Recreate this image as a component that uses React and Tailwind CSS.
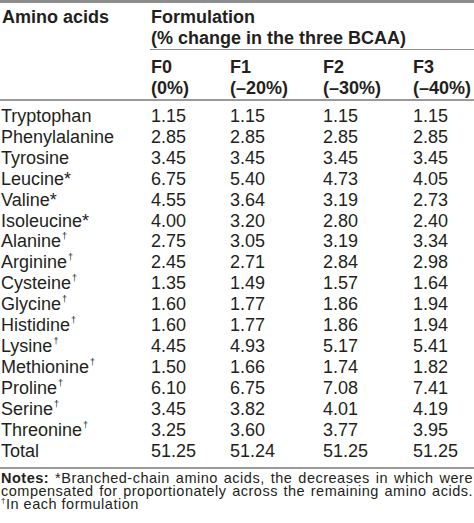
import React from 'react';

const rows = [
  ['Tryptophan', false, '1.15', '1.15', '1.15', '1.15'],
  ['Phenylalanine', false, '2.85', '2.85', '2.85', '2.85'],
  ['Tyrosine', false, '3.45', '3.45', '3.45', '3.45'],
  ['Leucine*', false, '6.75', '5.40', '4.73', '4.05'],
  ['Valine*', false, '4.55', '3.64', '3.19', '2.73'],
  ['Isoleucine*', false, '4.00', '3.20', '2.80', '2.40'],
  ['Alanine', true, '2.75', '3.05', '3.19', '3.34'],
  ['Arginine', true, '2.45', '2.71', '2.84', '2.98'],
  ['Cysteine', true, '1.35', '1.49', '1.57', '1.64'],
  ['Glycine', true, '1.60', '1.77', '1.86', '1.94'],
  ['Histidine', true, '1.60', '1.77', '1.86', '1.94'],
  ['Lysine', true, '4.45', '4.93', '5.17', '5.41'],
  ['Methionine', true, '1.50', '1.66', '1.74', '1.82'],
  ['Proline', true, '6.10', '6.75', '7.08', '7.41'],
  ['Serine', true, '3.45', '3.82', '4.01', '4.19'],
  ['Threonine', true, '3.25', '3.60', '3.77', '3.95'],
  ['Total', false, '51.25', '51.24', '51.25', '51.25'],
];

const cols = 'grid grid-cols-[150px_80px_93px_90px_61px]';

const App = () => {
  return (
    <div className="w-[474px] h-[523px] overflow-hidden bg-white text-[#231f20] font-['Liberation_Sans',Arial,sans-serif]">
      <div className="border-t-[3px] border-[#8c8c8c]" />

      {/* Header */}
      <div className={`${cols} text-[18px] leading-[21px] font-bold pt-[4px]`}>
        <div className="pl-[2px]">Amino acids</div>
        <div className="col-span-4 pl-[1px]">
          Formulation
          <br />
          (% change in the three BCAA)
        </div>
      </div>
      <div className={cols}>
        <div />
        <div className="col-span-4 border-t border-[#8c8c8c]" />
      </div>
      <div className={`${cols} text-[18px] leading-[21px] font-bold pt-[7px]`}>
        <div />
        <div className="pl-[1px]">F0<br />(0%)</div>
        <div>F1<br />(–20%)</div>
        <div>F2<br />(–30%)</div>
        <div>F3<br />(–40%)</div>
      </div>
      <div className="border-t-2 border-[#9a9a9a]" />

      {/* Body */}
      <div className="pt-[5px] pb-[6px] text-[18px] leading-[20.9px]">
        {rows.map(([name, dag, a, b, c, d]) => (
          <div key={name} className={cols}>
            <div className="pl-[1px]">
              {name}
              {dag && <sup className="text-[9px] top-[-0.9em] ml-[1px]">†</sup>}
            </div>
            <div className="pl-[1px]">{a}</div>
            <div>{b}</div>
            <div>{c}</div>
            <div>{d}</div>
          </div>
        ))}
      </div>
      <div className="border-t-2 border-[#9a9a9a]" />

      {/* Notes */}
      <div className="pt-[3px] px-[1px] text-[14.5px] leading-[12.6px] tracking-[0.5px]">
        <div className="whitespace-nowrap text-justify [text-align-last:justify]">
          <span className="font-bold">Notes:</span> *Branched-chain amino acids, the decreases in which were
        </div>
        <div className="whitespace-nowrap text-justify [text-align-last:justify]">
          compensated for proportionately across the remaining amino acids.
        </div>
        <div>
          <sup className="text-[8px] top-[-0.7em]">†</sup>In each formulation
        </div>
      </div>
    </div>
  );
};

export default App;
